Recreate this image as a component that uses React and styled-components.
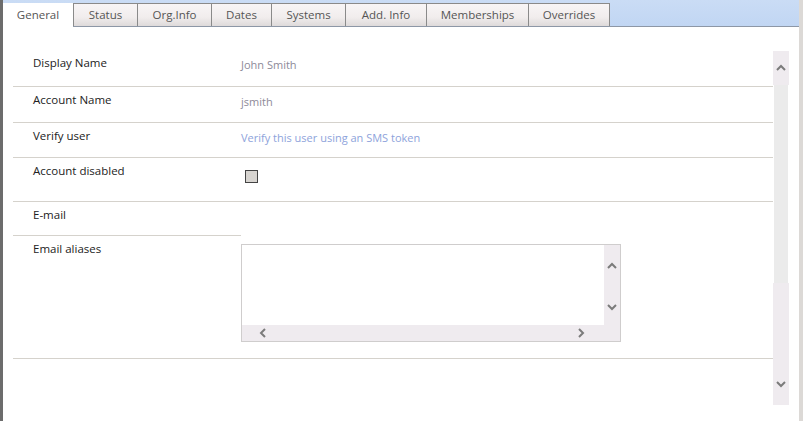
import React from "react";
import styled, { createGlobalStyle } from "styled-components";

const Global = createGlobalStyle`
  html, body { margin: 0; padding: 0; background: #fff; }
  body { font-family: "Open Sans", "Noto Sans", "Liberation Sans", sans-serif; }
`;

const Frame = styled.div`
  width: 803px;
  height: 421px;
  box-sizing: border-box;
  border-left: 3px solid #6c6c6c;
  border-right: 4px solid #dcd9d6;
  background: #fff;
  display: flex;
  flex-direction: column;
  overflow: hidden;
`;

const TabStrip = styled.div`
  height: 27px;
  flex-shrink: 0;
  box-sizing: border-box;
  border-bottom: 1px solid #8d97a6;
  background: linear-gradient(#cadcf5, #c1d6f3);
  display: flex;
  align-items: flex-end;
`;

const Tab = styled.div`
  width: ${(p) => p.$w}px;
  box-sizing: border-box;
  height: ${(p) => (p.$active ? 24 : 23)}px;
  margin-bottom: ${(p) => (p.$active ? -1 : 0)}px;
  position: relative;
  z-index: ${(p) => (p.$active ? 1 : 0)};
  background: ${(p) =>
    p.$active ? "#fff" : "linear-gradient(#f8f5f6, #f1eded 60%, #dedada)"};
  border-top: ${(p) => (p.$active ? "none" : "1px solid #8a8a8a")};
  border-left: ${(p) => (p.$active ? "none" : "1px solid #8a8a8a")};
  border-right: ${(p) => (p.$last ? "1px solid #8a8a8a" : "none")};
  display: flex;
  align-items: center;
  justify-content: center;
  padding-bottom: ${(p) => (p.$active ? 2 : 1)}px;
  font-size: 11.5px;
  color: #555;
`;

const Body = styled.div`
  flex: 1;
  display: flex;
`;

const Content = styled.div`
  flex: 1;
  padding: 23px 0 0 10px;
`;

const Row = styled.div`
  display: grid;
  grid-template-columns: 228px 1fr;
  box-sizing: border-box;
  height: ${(p) => p.$h}px;
  border-bottom: ${(p) => (p.$partial ? "none" : "1px solid #d5d2cc")};
`;

const Label = styled.div`
  padding: 5px 0 0 20px;
  font-size: 11.5px;
  line-height: 16px;
  color: #222;
  box-sizing: border-box;
  border-bottom: ${(p) => (p.$line ? "1px solid #d5d2cc" : "none")};
`;

const Value = styled.div`
  padding-top: ${(p) => p.$top ?? 7}px;
  font-size: 11px;
  line-height: 16px;
  color: ${(p) => (p.$link ? "#8ea3db" : "#8d8a98")};
`;

const Check = styled.div`
  width: 13px;
  height: 13px;
  box-sizing: border-box;
  margin-left: 4px;
  border: 1.5px solid #444;
  background: #d7d4d0;
`;

const ListBox = styled.div`
  width: 380px;
  height: 98px;
  box-sizing: border-box;
  border: 1px solid #cfcdcd;
  display: grid;
  grid-template-columns: 1fr 16px;
  grid-template-rows: 1fr 16px;
  background: #fff;
`;

const VBar = styled.div`
  background: #efebef;
  display: flex;
  flex-direction: column;
  align-items: center;
  justify-content: space-between;
  padding: 17px 0 14px;
`;

const HBar = styled.div`
  grid-column: 1 / 3;
  background: #efebef;
  display: flex;
  align-items: center;
  justify-content: space-between;
  padding: 0 35px 0 17px;
`;

const OuterScroll = styled.div`
  width: 16px;
  margin: 24px 10px 0 0;
  height: 354px;
  display: flex;
  flex-direction: column;
`;

const ScrollPart = styled.div`
  height: ${(p) => p.$h}px;
  background: ${(p) => p.$bg};
  margin: 0 ${(p) => p.$inset || 0}px;
  display: flex;
  justify-content: center;
  align-items: ${(p) => p.$align || "center"};
  padding-bottom: ${(p) => p.$pb || 0}px;
  box-sizing: border-box;
`;

const Chevron = ({ dir }) => {
  const paths = {
    up: "M1 6 L5 2 L9 6",
    down: "M1 2 L5 6 L9 2",
    left: "M6 1 L2 5 L6 9",
    right: "M2 1 L6 5 L2 9",
  };
  const horiz = dir === "left" || dir === "right";
  return (
    <svg width={horiz ? 8 : 10} height={horiz ? 10 : 8} viewBox={horiz ? "0 0 8 10" : "0 0 10 8"}>
      <path d={paths[dir]} fill="none" stroke="#7b7b7b" strokeWidth="2" />
    </svg>
  );
};

const tabs = [
  ["General", 70],
  ["Status", 64],
  ["Org.Info", 74],
  ["Dates", 60],
  ["Systems", 74],
  ["Add. Info", 81],
  ["Memberships", 102],
  ["Overrides", 82],
];

export default function App() {
  return (
    <Frame>
      <Global />
      <TabStrip>
        {tabs.map(([name, w], i) => (
          <Tab key={name} $w={w} $active={i === 0} $last={i === tabs.length - 1}>
            {name}
          </Tab>
        ))}
      </TabStrip>
      <Body>
        <Content>
          <Row $h={37}>
            <Label>Display Name</Label>
            <Value>John Smith</Value>
          </Row>
          <Row $h={36}>
            <Label>Account Name</Label>
            <Value>jsmith</Value>
          </Row>
          <Row $h={35}>
            <Label>Verify user</Label>
            <Value $link>Verify this user using an SMS token</Value>
          </Row>
          <Row $h={44}>
            <Label>Account disabled</Label>
            <Value $top={12}>
              <Check />
            </Value>
          </Row>
          <Row $h={34} $partial>
            <Label $line>E-mail</Label>
            <Value />
          </Row>
          <Row $h={123}>
            <Label>Email aliases</Label>
            <Value $top={8}>
              <ListBox>
                <div />
                <VBar>
                  <Chevron dir="up" />
                  <Chevron dir="down" />
                </VBar>
                <HBar>
                  <Chevron dir="left" />
                  <Chevron dir="right" />
                </HBar>
              </ListBox>
            </Value>
          </Row>
        </Content>
        <OuterScroll>
          <ScrollPart $h={34} $bg="#efebef">
            <Chevron dir="up" />
          </ScrollPart>
          <ScrollPart $h={198} $bg="#ebebeb" $inset={1} />
          <ScrollPart $h={122} $bg="#efebef" $align="flex-end" $pb={17}>
            <Chevron dir="down" />
          </ScrollPart>
        </OuterScroll>
      </Body>
    </Frame>
  );
}
